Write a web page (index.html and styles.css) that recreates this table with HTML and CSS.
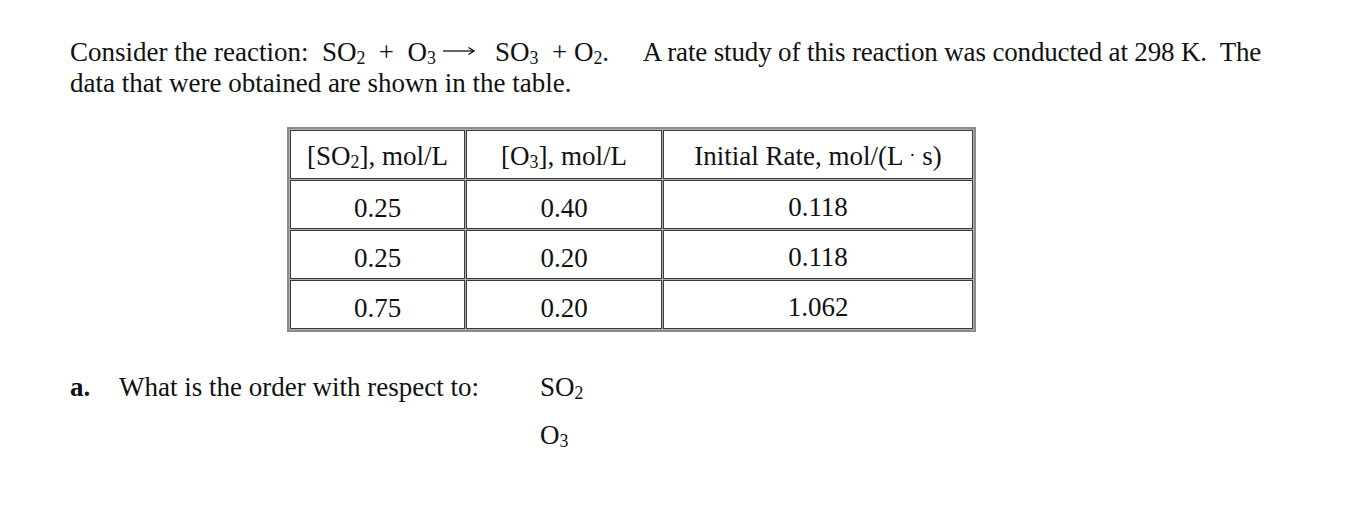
FILE: index.html
```html
<!DOCTYPE html>
<html>
<head>
<meta charset="utf-8">
<link rel="stylesheet" href="styles.css">
</head>
<body>
<div class="page">
  <p class="intro">Consider the reaction:&nbsp; SO<sub>2</sub>&nbsp; +&nbsp; O<sub>3</sub> <svg class="arrow" width="32" height="10" viewBox="0 0 32 10"><path d="M0 5H30" stroke="#111" stroke-width="1.3" fill="none"/><path d="M25.5 1.5L31 5L25.5 8.5" stroke="#111" stroke-width="1.3" fill="none"/></svg>&nbsp;&nbsp; SO<sub>3</sub>&nbsp; + O<sub>2</sub>.&nbsp;&nbsp;&nbsp;&nbsp; <span class="rest">A rate study of this reaction was conducted at 298 K.&nbsp; The</span><br>data that were obtained are shown in the table.</p>
  <div class="table-wrap">
    <table class="data">
      <tr class="head">
        <td class="c1">[SO<sub>2</sub>], mol/L</td>
        <td class="c2">[O<sub>3</sub>], mol/L</td>
        <td class="c3">Initial Rate, mol/(L <span class="dot">·</span> s)</td>
      </tr>
      <tr><td>0.25</td><td>0.40</td><td class="up">0.118</td></tr>
      <tr><td>0.25</td><td>0.20</td><td class="up">0.118</td></tr>
      <tr><td>0.75</td><td>0.20</td><td class="up">1.062</td></tr>
    </table>
  </div>
  <div class="question">
    <span class="label">a.</span>
    <span class="qtext">What is the order with respect to:</span>
    <div class="species">
      <span>SO<sub>2</sub></span>
      <span>O<sub>3</sub></span>
    </div>
  </div>
</div>
</body>
</html>
```
FILE: styles.css
```css
html, body {
  margin: 0;
  padding: 0;
  background: #fff;
}
body {
  font-family: "Liberation Serif", "Times New Roman", serif;
  font-size: 27px;
  color: #111;
}
.page {
  padding: 37px 0 0 70px;
}
.intro {
  margin: 0;
  line-height: 31px;
  white-space: nowrap;
}
.rest {
  letter-spacing: -0.15px;
}
sub {
  font-size: 0.66em;
  vertical-align: -0.18em;
  line-height: 0;
}
.arrow {
  vertical-align: 5px;
}
.table-wrap {
  padding: 28px 0 0 217px;
}
.data {
  border: 2px solid #8a8a8a;
  border-spacing: 1px;
  background: #b0b0b0;
  padding: 0;
}
.data td {
  background: #fff;
  border: 1px solid #3a3a3a;
  text-align: center;
  height: 39px;
  padding: 8px 0 0;
  line-height: 1;
}
.data .head td {
  height: 43px;
  padding-top: 4px;
}
.data .c1 { width: 173px; }
.data .c2 { width: 194px; }
.data .c3 { width: 308px; }
.data td.up {
  height: 42px;
  padding-top: 5px;
}
.dot {
  font-size: 0.7em;
  vertical-align: 0.2em;
}
.question {
  display: flex;
  align-items: flex-start;
  padding-top: 40px;
  line-height: 31px;
}
.label {
  font-weight: bold;
  width: 49px;
}
.qtext {
  width: 421px;
}
.species {
  display: flex;
  flex-direction: column;
  gap: 17px;
}
```
